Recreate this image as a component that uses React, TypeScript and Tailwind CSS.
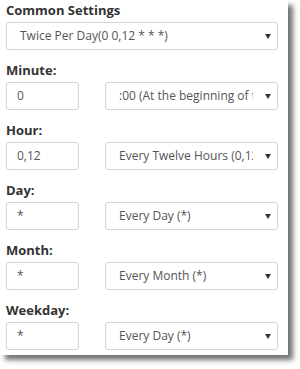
import React from "react";

const font = { fontFamily: '"Open Sans", "Noto Sans", sans-serif' };

function Arrow() {
  return (
    <svg width="6" height="5" viewBox="0 0 6 5" className="shrink-0">
      <path d="M0 0 L6 0 L3 5 Z" fill="#333" />
    </svg>
  );
}

function Select({ text, className }: { text: string; className: string }) {
  return (
    <div
      className={`flex h-[28px] min-w-0 items-center rounded-[3px] border border-[#d4d4d4] bg-white pl-[13px] pr-[6px] ${className}`}
    >
      <div className="mr-[12px] min-w-0 flex-1 overflow-hidden whitespace-nowrap text-[12px] text-[#555]">
        {text}
      </div>
      <Arrow />
    </div>
  );
}

function Input({ value }: { value: string }) {
  return (
    <div className="flex h-[28px] w-[73px] shrink-0 items-center rounded-[3px] border border-[#d4d4d4] bg-white pl-[10px] text-[12px] text-[#555]">
      {value}
    </div>
  );
}

function Label({ children }: { children: React.ReactNode }) {
  return (
    <div className="h-[16px] text-[13px] font-bold leading-[16px] text-[#333]">
      {children}
    </div>
  );
}

const rows = [
  { label: "Minute:", value: "0", sel: ":00 (At the beginning of the hour)" },
  { label: "Hour:", value: "0,12", sel: "Every Twelve Hours (0,12)" },
  { label: "Day:", value: "*", sel: "Every Day (*)" },
  { label: "Month:", value: "*", sel: "Every Month (*)" },
  { label: "Weekday:", value: "*", sel: "Every Day (*)" },
];

export default function App() {
  return (
    <div className="h-[369px] w-[300px] overflow-hidden bg-white" style={font}>
      <div className="flex h-[355px] w-[288px] flex-col gap-[12px] bg-white pb-[6px] pl-[6px] pr-[10px] pt-[2px] shadow-[5px_5px_5px_rgba(0,0,0,0.55)]">
        <div className="flex flex-col gap-[4px]">
          <Label>Common Settings</Label>
          <Select text="Twice Per Day(0 0,12 * * *)" className="w-full" />
        </div>
        {rows.map((r) => (
          <div key={r.label} className="flex flex-col gap-[4px]">
            <Label>{r.label}</Label>
            <div className="flex gap-[26px]">
              <Input value={r.value} />
              <Select text={r.sel} className="flex-1" />
            </div>
          </div>
        ))}
      </div>
    </div>
  );
}
